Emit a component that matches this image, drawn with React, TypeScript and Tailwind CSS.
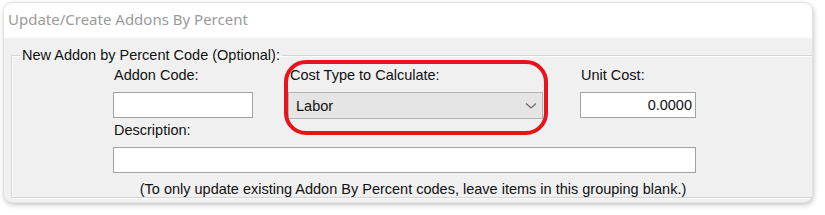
import React from "react";

const sans = "font-['Liberation_Sans',Arial,sans-serif]";

const App: React.FC = () => {
  return (
    <div className="relative w-[825px] h-[215px] bg-white overflow-hidden">
      <div className="ml-[3px] mt-[2px] w-[810px] h-[201px] rounded-[9px] border border-[#e2e2e2] bg-[#f0f0f0] shadow-[1px_2px_5px_rgba(0,0,0,0.22)] overflow-hidden flex flex-col">
        {/* title bar */}
        <div className="h-[35px] bg-white shrink-0 flex items-center pl-[4px]">
          <span className="font-['Noto_Sans',sans-serif] text-[15px] text-[#9a9a9a] leading-none pb-[3px]">
            Update/Create Addons By Percent
          </span>
        </div>

        {/* body */}
        <div className={`flex-1 pl-[7px] pt-[9px] ${sans} text-[14.5px] text-[#111]`}>
          <fieldset className="w-[830px] h-[151px] border border-[#d4d4d4] shadow-[inset_1px_1px_0_#fff,1px_1px_0_#fff] px-0 pt-0">
            <legend className="ml-[8px] px-[2px] leading-4">
              New Addon by Percent Code (Optional):
            </legend>

            <div className="pl-[101px] pt-[4px]">
              <div className="flex gap-[35px]">
                <div className="flex flex-col w-[140px]">
                  <label className="pl-[1px] leading-4">Addon Code:</label>
                  <div className="mt-[9px] h-[26px] bg-white border border-[#a2a2a2]" />
                </div>

                <div className="flex flex-col w-[255px]">
                  <label className="pl-[2px] leading-4">Cost Type to Calculate:</label>
                  <div className="mt-[9px] h-[27px] bg-[#e5e5e5] border border-[#b4b4b4] flex items-center justify-between pl-[7px] pr-[5px]">
                    <span className="leading-4">Labor</span>
                    <svg width="12" height="8" viewBox="0 0 12 8">
                      <path d="M1 1.5 L6 6 L11 1.5" fill="none" stroke="#6a6a6a" strokeWidth="1.2" />
                    </svg>
                  </div>
                </div>

                <div className="flex flex-col w-[116px] ml-[2px]">
                  <label className="pl-[1px] leading-4">Unit Cost:</label>
                  <div className="mt-[9px] h-[26px] bg-white border border-[#a2a2a2] flex items-center justify-end pr-[3px]">
                    <span className="leading-4">0.0000</span>
                  </div>
                </div>
              </div>

              <div className="mt-[3px] flex flex-col w-[583px]">
                <label className="pl-[1px] leading-4">Description:</label>
                <div className="mt-[9px] h-[26px] bg-white border border-[#a2a2a2]" />
              </div>
            </div>

            <p className="mt-[8px] text-center leading-4 pr-[26px]">
              (To only update existing Addon By Percent codes, leave items in this grouping blank.)
            </p>
          </fieldset>
        </div>
      </div>

      {/* red annotation */}
      <div className="absolute left-[284px] top-[60px] w-[264px] h-[75px] rounded-[22px] border-[4px] border-[#e8141c]" />
    </div>
  );
};

export default App;
